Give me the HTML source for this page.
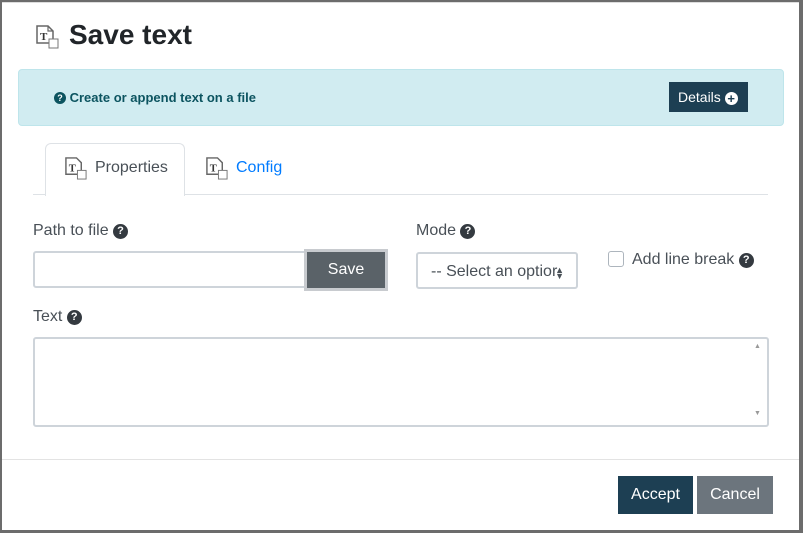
<!DOCTYPE html>
<html><head><style>
*{box-sizing:border-box;margin:0;padding:0}
body{width:803px;height:533px;background:#6c6c6c;font-family:"Liberation Sans",Arial,sans-serif;position:relative;overflow:hidden;color:#212529}
.m{position:absolute;left:2px;top:2px;width:797px;height:528px;background:#fff;border-top:1px solid #ddd}
.a{position:absolute}
.q{display:inline-block;width:15px;height:15px;border-radius:50%;background:#343a40;color:#fff;font-size:11px;font-weight:bold;text-align:center;line-height:15px;vertical-align:1px}
.lbl{font-size:16px;color:#495057}
</style></head><body>
<div class="m"></div>
<svg class="a" style="left:35px;top:24px" width="25" height="25" viewBox="0 0 25 25"><path d="M2 2h11l5 5v12H2z" fill="none" stroke="#666" stroke-width="1.5"/><path d="M13 2v5h5" fill="none" stroke="#666" stroke-width="1.2"/><text x="5" y="16" font-size="11" font-weight="bold" font-family="Liberation Serif" fill="#333">T</text><rect x="14" y="15" width="9" height="9" fill="#fff" stroke="#777"/></svg>
<div class="a" style="left:69px;top:19px;font-size:28px;font-weight:bold">Save text</div>
<div class="a" style="left:18px;top:69px;width:766px;height:57px;background:#d1ecf1;border:1px solid #bee5eb;border-radius:4px"></div>
<div class="a" style="left:54px;top:90px;font-size:13px;font-weight:bold;color:#0c5460"><span class="q" style="background:#0c5460;width:12px;height:12px;line-height:12px;font-size:9px">?</span> Create or append text on a file</div>
<div class="a" style="left:669px;top:82px;width:79px;height:30px;background:#1d3f53;color:#fff;font-size:14px;line-height:30px;padding-left:9px">Details <span style="display:inline-block;width:13px;height:13px;border-radius:50%;background:#fff;color:#1d3f53;font-size:13px;font-weight:bold;line-height:13px;text-align:center;vertical-align:-1px">+</span></div>
<div class="a" style="left:33px;top:194px;width:735px;height:1px;background:#dee2e6"></div>
<div class="a" style="left:45px;top:143px;width:140px;height:53px;background:#fff;border:1px solid #dee2e6;border-bottom:none;border-radius:6px 6px 0 0"></div>
<svg class="a" style="left:64px;top:156px" width="24" height="24" viewBox="0 0 25 25"><path d="M2 2h11l5 5v12H2z" fill="none" stroke="#666" stroke-width="1.5"/><text x="5" y="16" font-size="11" font-weight="bold" font-family="Liberation Serif" fill="#333">T</text><rect x="14" y="15" width="9" height="9" fill="#fff" stroke="#777"/></svg>
<div class="a" style="left:95px;top:159px;font-size:16px;color:#495057">Properties</div>
<svg class="a" style="left:205px;top:156px" width="24" height="24" viewBox="0 0 25 25"><path d="M2 2h11l5 5v12H2z" fill="none" stroke="#666" stroke-width="1.5"/><text x="5" y="16" font-size="11" font-weight="bold" font-family="Liberation Serif" fill="#333">T</text><rect x="14" y="15" width="9" height="9" fill="#fff" stroke="#777"/></svg>
<div class="a" style="left:236px;top:159px;font-size:16px;color:#007bff">Config</div>
<div class="a lbl" style="left:33px;top:222px">Path to file <span class="q">?</span></div>
<div class="a" style="left:33px;top:251px;width:274px;height:37px;border:2px solid #ced4da;border-radius:3px 0 0 3px"></div>
<div class="a" style="left:304px;top:249px;width:84px;height:42px;background:#5a6268;border:3px solid #c8cbcf;color:#fff;font-size:16px;text-align:center;line-height:36px">Save</div>
<div class="a lbl" style="left:416px;top:222px">Mode <span class="q">?</span></div>
<div class="a" style="left:416px;top:252px;width:162px;height:37px;border:2px solid #ced4da;border-radius:3px;font-size:16px;color:#495057;line-height:35px;padding-left:13px;white-space:nowrap;overflow:hidden">-- Select an optior<span style="position:absolute;right:12px;top:-1px;font-size:9px">▲</span><span style="position:absolute;right:12px;top:5px;font-size:9px">▼</span></div>
<div class="a" style="left:608px;top:251px;width:16px;height:16px;border:1px solid #adb5bd;border-radius:3px"></div>
<div class="a lbl" style="left:632px;top:251px">Add line break <span class="q">?</span></div>
<div class="a lbl" style="left:33px;top:308px">Text <span class="q">?</span></div>
<div class="a" style="left:33px;top:337px;width:736px;height:90px;border:2px solid #ced4da;border-radius:3px"></div>
<div class="a" style="left:754px;top:343px;font-size:7px;color:#999">▲</div>
<div class="a" style="left:754px;top:410px;font-size:7px;color:#999">▼</div>
<div class="a" style="left:2px;top:459px;width:797px;height:1px;background:#e3e3e3"></div>
<div class="a" style="left:618px;top:476px;width:75px;height:38px;background:#1d3f53;color:#fff;font-size:16px;text-align:center;line-height:38px">Accept</div>
<div class="a" style="left:697px;top:476px;width:76px;height:38px;background:#6c757d;color:#fff;font-size:16px;text-align:center;line-height:38px">Cancel</div>
</body></html>
